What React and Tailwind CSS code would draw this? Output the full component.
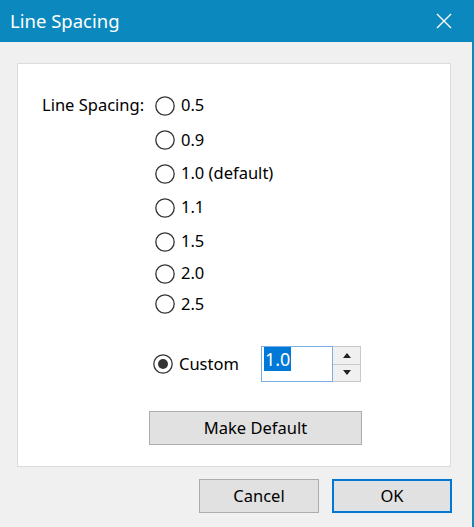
import { useState } from "react";

const options = [
  { label: "0.5", h: "h-[35px]" },
  { label: "0.9", h: "h-[34px]" },
  { label: "1.0 (default)", h: "h-[33px]" },
  { label: "1.1", h: "h-[35px]" },
  { label: "1.5", h: "h-[33px]" },
  { label: "2.0", h: "h-[31px]" },
  { label: "2.5", h: "h-[30px]" },
];

function Radio({ checked }) {
  return (
    <svg width="20" height="20" viewBox="0 0 20 20" className="shrink-0">
      <circle cx="10" cy="10" r="9.2" fill="white" stroke="#333" strokeWidth="1.3" />
      {checked && <circle cx="10" cy="10" r="5" fill="#333" />}
    </svg>
  );
}

export default function App() {
  const [value, setValue] = useState("custom");

  return (
    <div className="w-[474px] h-[527px] bg-[#f0f0f0] border-r-2 border-[#0b87bb] flex flex-col font-['Noto_Sans',sans-serif] text-black">
      {/* title bar */}
      <div className="h-[42px] bg-[#0b88bd] flex items-center justify-between pl-[10px] pr-[20px] text-white">
        <span className="text-[18.5px] leading-none">Line Spacing</span>
        <svg width="16" height="16" viewBox="0 0 16 16">
          <path d="M1 1L15 15M15 1L1 15" stroke="white" strokeWidth="1.4" />
        </svg>
      </div>

      {/* body */}
      <div className="pl-[17px] pr-[21px] pt-[21px]">
        <div className="h-[404px] bg-white border border-[#dcdcdc] pt-[24px] pl-[24px] text-[16.5px]">
          <div className="flex">
            <div className="w-[113px] h-[35px] flex items-center">Line Spacing:</div>
            <div className="flex flex-col">
              {options.map((o) => (
                <label
                  key={o.label}
                  onClick={() => setValue(o.label)}
                  className={`${o.h} flex items-center gap-[6px] cursor-default`}
                >
                  <Radio checked={value === o.label} />
                  <span>{o.label}</span>
                </label>
              ))}
            </div>
          </div>

          {/* custom */}
          <div className="flex items-center h-[36px] mt-[27px] ml-[111px]">
            <label onClick={() => setValue("custom")} className="flex items-center gap-[6px] w-[108px]">
              <Radio checked={value === "custom"} />
              <span>Custom</span>
            </label>
            <div className="flex h-[36px]">
              <div className="w-[72px] h-full border border-[#7aaee0] bg-white pl-[2px] pt-px">
                <span className="bg-[#0078d7] text-white text-[18px] leading-[21px] px-px">1.0</span>
              </div>
              <div className="w-[28px] flex flex-col border border-l-0 border-[#c8c8c8] bg-[#f0f0f0]">
                <div className="flex-1 flex items-center justify-center border-b border-[#c8c8c8]">
                  <svg width="8" height="5" viewBox="0 0 8 5">
                    <path d="M4 0L8 5H0Z" fill="#222" />
                  </svg>
                </div>
                <div className="flex-1 flex items-center justify-center">
                  <svg width="8" height="5" viewBox="0 0 8 5">
                    <path d="M0 0H8L4 5Z" fill="#222" />
                  </svg>
                </div>
              </div>
            </div>
          </div>

          <button className="mt-[29px] ml-[107px] w-[213px] h-[34px] bg-[#e1e1e1] border border-[#adadad] text-[16.5px]">
            Make Default
          </button>
        </div>
      </div>

      {/* footer */}
      <div className="flex justify-end gap-[13px] pr-[20px] mt-[12px]">
        <button className="w-[120px] h-[34px] bg-[#e1e1e1] border border-[#adadad] text-[16.5px]">Cancel</button>
        <button className="w-[120px] h-[34px] bg-[#e1e1e1] border-2 border-[#0078d7] text-[16.5px]">OK</button>
      </div>
    </div>
  );
}
